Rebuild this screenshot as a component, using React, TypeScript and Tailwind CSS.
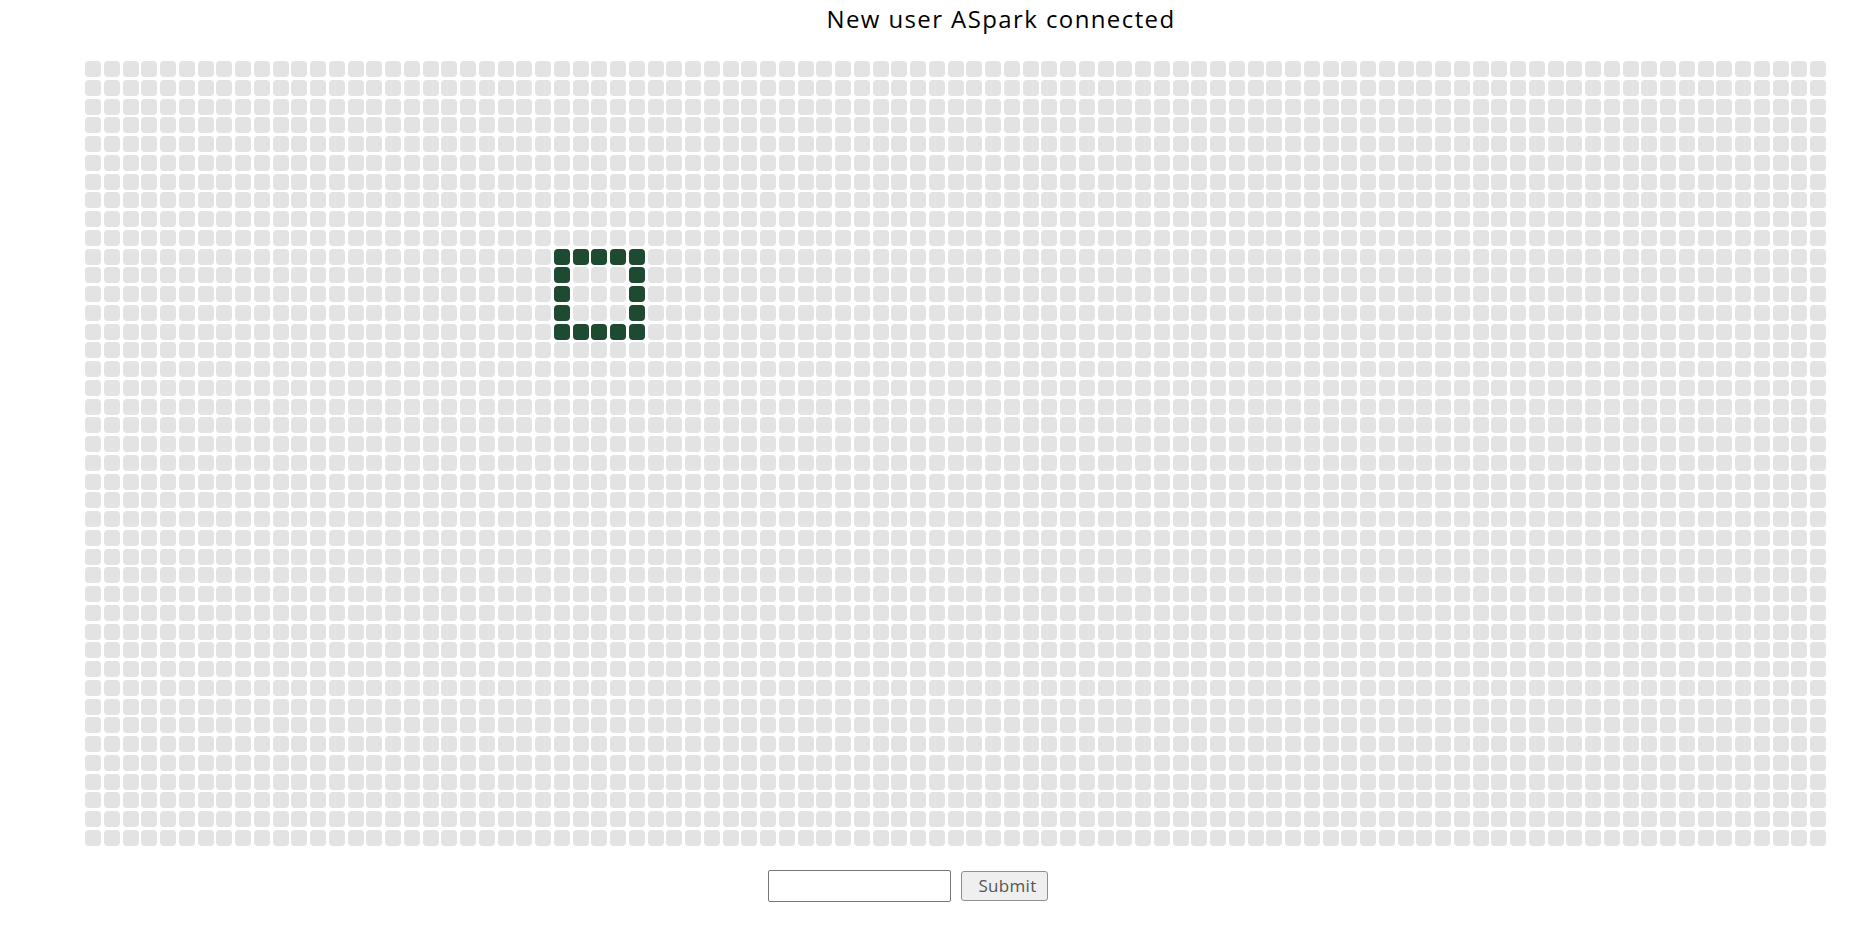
import React, { useState } from 'react';

const COLS = 93;
const ROWS = 42;

// hollow 5x5 square, rows 10-14, cols 25-29
const isLit = (r: number, c: number) => {
  if (r < 10 || r > 14 || c < 25 || c > 29) return false;
  return r === 10 || r === 14 || c === 25 || c === 29;
};

const App = () => {
  const [value, setValue] = useState('');

  const cells = [];
  for (let r = 0; r < ROWS; r++) {
    for (let c = 0; c < COLS; c++) {
      cells.push(
        <div
          key={`${r}-${c}`}
          className={isLit(r, c) ? 'w-4 h-4 rounded-[4px] bg-[#1f4a32]' : 'w-4 h-4 rounded-[4px] bg-[#e3e3e3]'}
        />
      );
    }
  }

  return (
    <div className="w-[1865px] h-[937px] bg-white overflow-hidden" style={{ fontFamily: '"Open Sans", "Noto Sans", sans-serif' }}>
      {/* Header */}
      <div className="h-[61px] pt-[1px]">
        <div className="ml-[751px] w-[500px] text-center text-[24px] leading-[36px] text-black tracking-[1.4px]">
          New user ASpark connected
        </div>
      </div>

      {/* Board */}
      <div className="ml-[85px] grid grid-cols-[repeat(93,16px)] gap-[2.75px] w-max">
        {cells}
      </div>

      {/* Form */}
      <div className="mt-[24px] ml-[768px] flex items-center gap-[10px]">
        <input
          value={value}
          onChange={(e) => setValue(e.target.value)}
          className="w-[183px] h-[32px] border border-[#767676] rounded-[2px] px-2 text-[15px] outline-none"
        />
        <button className="w-[87px] h-[30px] border border-[#8f8f8f] rounded-[3px] bg-[#efefef] text-[17px] tracking-[0.3px] text-[#555] pl-[6px]">
          Submit
        </button>
      </div>
    </div>
  );
};

export default App;
